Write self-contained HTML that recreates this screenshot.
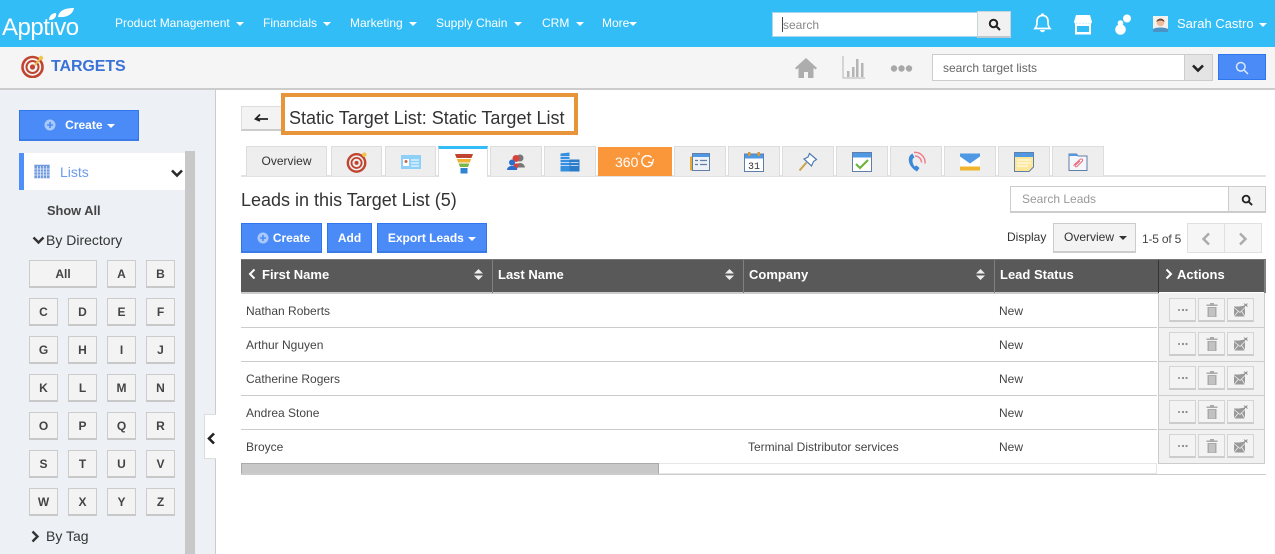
<!DOCTYPE html>
<html><head><meta charset="utf-8"><style>
html,body{margin:0;padding:0}
body{width:1275px;height:554px;overflow:hidden;position:relative;background:#fff;font-family:"Liberation Sans",sans-serif;font-size:12px;color:#333}
.a,.a *{box-sizing:border-box}
.a{position:absolute;white-space:nowrap}
.nav{color:#fff;font-size:12px;top:16px;line-height:14px}
.caret{display:inline-block;width:0;height:0;border-left:4px solid transparent;border-right:4px solid transparent;border-top:4px solid currentColor;vertical-align:middle;margin-left:3px}
.btn{background:#4b8bf8;border:1px solid #2f76ee;border-bottom:2px solid #3a7be8;color:#fff;font-weight:bold;text-align:center}
.k{width:29px;height:28px;background:#f3f3f3;border:1px solid #ccc;border-bottom:2px solid #c8c8c8;font-weight:bold;font-size:12px;line-height:26px;text-align:center;color:#444}
.tab{top:146px;height:30px;background:#eee;border:1px solid #ddd;border-bottom:none}
.tab svg{position:absolute;left:50%;top:50%;transform:translate(-50%,-50%)}
.th{color:#fff;font-weight:bold;font-size:13px;top:267px;line-height:15px}
.td{font-size:12px;line-height:14px;color:#444}
.hl{left:241px;height:1px;width:916px;background:#ccc}
.ab{width:27px;height:24px;background:#f3f3f3;border:1px solid #d4d4d4;border-bottom:2px solid #ccc}
.ab svg{position:absolute;left:50%;top:50%;transform:translate(-50%,-50%)}
</style></head><body>

<div class="a" style="left:0;top:0;width:1275px;height:47px;background:#33bdf6"></div>
<div class="a" style="left:2px;top:14px;color:#fff;font-size:24px;letter-spacing:-.5px;line-height:27px;font-weight:normal">Apptivo</div>
<svg class="a" style="left:48px;top:7px" width="27" height="14" viewBox="0 0 27 14"><path d="M1 13C1 9 4 6 8 6C9 10 6 13 1 13Z M10 10C11 4 16 1 26 1C25 7 19 11 10 10Z" fill="#fff"/></svg>
<div class="a nav" style="left:115px">Product Management <span class="caret"></span></div>
<div class="a nav" style="left:263px">Financials <span class="caret"></span></div>
<div class="a nav" style="left:350px">Marketing <span class="caret"></span></div>
<div class="a nav" style="left:436px">Supply Chain <span class="caret"></span></div>
<div class="a nav" style="left:542px">CRM <span class="caret"></span></div>
<div class="a nav" style="left:602px">More<span class="caret" style="margin-left:0"></span></div>

<div class="a" style="left:772px;top:12px;width:206px;height:25px;background:#fff;border:1px solid #a9d8ee;color:#888;line-height:24px;padding-left:10px;font-size:12px">search</div>
<div class="a" style="left:782px;top:17px;width:1px;height:15px;background:#444"></div>
<div class="a" style="left:977px;top:11px;width:34px;height:27px;background:#f1f1f1;border:1px solid #c8d4da;border-bottom:2px solid #bcc8ce"></div>
<svg class="a" style="left:988px;top:18px" width="13" height="13" viewBox="0 0 13 13"><circle cx="5.500" cy="5.500" r="3.700" fill="none" stroke="#222" stroke-width="2"/><path d="M8.500 8.500L12 12" stroke="#222" stroke-width="2"/></svg>
<svg class="a" style="left:1033px;top:13px" width="19" height="20" viewBox="0 0 19 20"><path d="M2 15.500C4 13 4 11 4 8C4 4.500 6.500 2.500 9.500 2.500C12.500 2.500 15 4.500 15 8C15 11 15 13 17 15.500Z" fill="none" stroke="#fff" stroke-width="1.700"/><circle cx="9.500" cy="1.600" r="1.400" fill="#fff"/><path d="M7 17a2.500 2.200 0 0 0 5 0Z" fill="#fff"/></svg>
<svg class="a" style="left:1074px;top:14px" width="18" height="21" viewBox="0 0 18 21"><path d="M2 1H16L18 8C18 10 15 10 15 8.500C15 10 12 10 12 8.500C12 10 9 10 9 8.500C9 10 6 10 6 8.500C6 10 3 10 3 8.500C3 10 0 10 0 8Z" fill="#fff"/><path d="M1 9.500H17V20.500H1Z M3 12V18H15V12Z" fill="#fff" fill-rule="evenodd"/></svg>
<svg class="a" style="left:1114px;top:14px" width="18" height="22" viewBox="0 0 18 22"><circle cx="13" cy="4.500" r="4" fill="#fff"/><circle cx="6.500" cy="9" r="2.800" fill="#fff"/><circle cx="6.500" cy="15.500" r="5.300" fill="#fff"/></svg>
<svg class="a" style="left:1153px;top:16px" width="15" height="16" viewBox="0 0 15 16"><rect width="15" height="16" fill="#f3f1ee"/><path d="M0 16V13C3 11 12 11 15 13V16Z" fill="#4b93c4"/><circle cx="7.500" cy="6.500" r="3.800" fill="#eebb9d"/><path d="M3.500 6C3.500 1.500 11.500 1.500 11.500 6C9 4 6 4 3.500 6Z" fill="#6d4a34"/></svg>
<div class="a" style="left:1177px;top:16px;color:#fff;font-size:13px;line-height:15px">Sarah Castro <span class="caret" style="margin-left:2px"></span></div>

<div class="a" style="left:0;top:47px;width:1275px;height:43px;background:#f5f5f5;border-bottom:2px solid #ccc"></div>
<svg class="a" style="left:21px;top:54px" width="24" height="24" viewBox="0 0 24 24"><circle cx="11.500" cy="13" r="10" fill="none" stroke="#c0442f" stroke-width="2.600"/><circle cx="11.500" cy="13" r="6" fill="none" stroke="#c0442f" stroke-width="2"/><circle cx="11.500" cy="13" r="2.600" fill="#c0442f"/><path d="M14 11L19 5" stroke="#e7b93f" stroke-width="2"/><circle cx="20" cy="4" r="2.200" fill="#f0c64f"/></svg>
<div class="a" style="left:51px;top:58px;color:#3a72d8;font-weight:bold;font-size:16px;letter-spacing:-.1px;line-height:18px">TARGETS</div>

<svg class="a" style="left:795px;top:57px" width="22" height="22" viewBox="0 0 22 22"><path d="M11 1L0 11L1.500 12.500L3.500 11V21H9V15H13V21H18.500V11L20.500 12.500L22 11Z" fill="#adadad"/></svg>
<svg class="a" style="left:842px;top:56px" width="24" height="23" viewBox="0 0 24 23"><path d="M1 0V22H23" fill="none" stroke="#b5b5b5" stroke-width="1"/><path d="M5 15h2.500v6H5z M10 11h2.500v10H10z M14 3h2.500v18H14z M19 7h2.500v14H19z" fill="#b5b5b5"/></svg>
<svg class="a" style="left:890px;top:64px" width="23" height="9" viewBox="0 0 23 9"><circle cx="4" cy="4.500" r="3.200" fill="#a8a8a8"/><circle cx="11.500" cy="4.500" r="3.200" fill="#a8a8a8"/><circle cx="19" cy="4.500" r="3.200" fill="#a8a8a8"/></svg>
<div class="a" style="left:932px;top:54px;width:253px;height:27px;background:#fff;border:1px solid #ccc;color:#666;line-height:26px;padding-left:10px;font-size:12px">search target lists</div>
<div class="a" style="left:1184px;top:54px;width:29px;height:27px;background:#e4e4e4;border:1px solid #ccc"></div>
<svg class="a" style="left:1191px;top:64px" width="14" height="9" viewBox="0 0 14 9"><path d="M2 1.500L7 6.500L12 1.500" fill="none" stroke="#222" stroke-width="2.600"/></svg>
<div class="a" style="left:1218px;top:54px;width:48px;height:26px;background:#4b8bf8;border:1px solid #2f76ee"></div>
<svg class="a" style="left:1235px;top:61px" width="14" height="14" viewBox="0 0 14 14"><circle cx="5.800" cy="5.800" r="4.300" fill="none" stroke="#dbe8ff" stroke-width="1.500"/><path d="M9 9L13 13" stroke="#dbe8ff" stroke-width="1.500"/></svg>

<div class="a" style="left:0;top:90px;width:216px;height:464px;background:#edf0f5;border-right:1px solid #ccc"></div>
<div class="a btn" style="left:19px;top:110px;width:120px;height:31px;line-height:28px;font-size:12px;padding-left:22px"><svg width="12" height="12" viewBox="0 0 12 12" style="position:absolute;left:24px;top:8px"><circle cx="6" cy="6" r="5.500" fill="#a9c9fb"/><path d="M6 3V9M3 6H9" stroke="#4b8bf8" stroke-width="1.600"/></svg>Create <span class="caret" style="margin-left:1px"></span></div>

<div class="a" style="left:19px;top:153px;width:166px;height:37px;background:#fff;border-left:5px solid #4f8ff9"></div>
<svg class="a" style="left:34px;top:164px" width="16" height="15" viewBox="0 0 16 15"><rect width="16" height="15" fill="#dbe4f5"/><rect x="0.500" y="1" width="15" height="13" fill="#6f9ae0"/><path d="M0 5H16M0 8H16M0 11H16M3.500 2V15M6.500 2V15M9.500 2V15M12.500 2V15" stroke="#e4ebf8" stroke-width=".8"/></svg>
<div class="a" style="left:60px;top:164px;color:#6c9bf0;font-size:14px;line-height:16px">Lists</div>
<svg class="a" style="left:170px;top:169px" width="14" height="9" viewBox="0 0 14 9"><path d="M2 1.500L7 6.500L12 1.500" fill="none" stroke="#2b2b2b" stroke-width="2.600"/></svg>
<div class="a" style="left:185px;top:151px;width:10px;height:403px;background:#c8c8c8"></div>
<div class="a" style="left:47px;top:203px;font-weight:bold;color:#444;font-size:12.800px;line-height:15px">Show All</div>
<svg class="a" style="left:32px;top:236px" width="13" height="9" viewBox="0 0 13 9"><path d="M1.500 1.500L6.500 6.500L11.500 1.500" fill="none" stroke="#333" stroke-width="2.400"/></svg>
<div class="a" style="left:46px;top:232px;color:#333;font-size:14px;line-height:16px">By Directory</div>

<div class="a k" style="left:29px;top:260px;width:68px">All</div>
<div class="a k" style="left:107px;top:260px">A</div><div class="a k" style="left:146px;top:260px">B</div>
<div class="a k" style="left:29px;top:298px">C</div><div class="a k" style="left:68px;top:298px">D</div><div class="a k" style="left:107px;top:298px">E</div><div class="a k" style="left:146px;top:298px">F</div>
<div class="a k" style="left:29px;top:336px">G</div><div class="a k" style="left:68px;top:336px">H</div><div class="a k" style="left:107px;top:336px">I</div><div class="a k" style="left:146px;top:336px">J</div>
<div class="a k" style="left:29px;top:374px">K</div><div class="a k" style="left:68px;top:374px">L</div><div class="a k" style="left:107px;top:374px">M</div><div class="a k" style="left:146px;top:374px">N</div>
<div class="a k" style="left:29px;top:412px">O</div><div class="a k" style="left:68px;top:412px">P</div><div class="a k" style="left:107px;top:412px">Q</div><div class="a k" style="left:146px;top:412px">R</div>
<div class="a k" style="left:29px;top:450px">S</div><div class="a k" style="left:68px;top:450px">T</div><div class="a k" style="left:107px;top:450px">U</div><div class="a k" style="left:146px;top:450px">V</div>
<div class="a k" style="left:29px;top:488px">W</div><div class="a k" style="left:68px;top:488px">X</div><div class="a k" style="left:107px;top:488px">Y</div><div class="a k" style="left:146px;top:488px">Z</div>
<svg class="a" style="left:31px;top:530px" width="9" height="13" viewBox="0 0 9 13"><path d="M1.500 1.500L6.500 6.500L1.500 11.500" fill="none" stroke="#333" stroke-width="2.400"/></svg>
<div class="a" style="left:46px;top:528px;color:#333;font-size:14px;line-height:16px">By Tag</div>
<div class="a" style="left:204px;top:414px;width:12px;height:45px;background:#fff;border:1px solid #ddd;border-right:none"></div>
<svg class="a" style="left:207px;top:432px" width="9" height="13" viewBox="0 0 9 13"><path d="M7 1.500L2 6.500L7 11.500" fill="none" stroke="#222" stroke-width="2.600"/></svg>

<div class="a" style="left:241px;top:106px;width:41px;height:25px;background:#f3f3f3;border:1px solid #ddd;border-bottom:2px solid #ccc"></div>
<svg class="a" style="left:254px;top:113px" width="15" height="11" viewBox="0 0 15 11"><path d="M14 6H2M6 1.500L1.500 6L6 8" fill="none" stroke="#222" stroke-width="1.700"/></svg>
<div class="a" style="left:281px;top:93px;width:297px;height:42px;border:4px solid #e8943a;background:#fff"></div>
<div class="a" style="left:289px;top:108px;font-size:18px;line-height:21px;color:#333">Static Target List: Static Target List</div>

<div class="a" style="left:241px;top:175px;width:1025px;height:2px;background:#e2e2e2"></div>
<div class="a tab" style="left:246px;width:81px;text-align:center;font-size:12px;line-height:28px;color:#333">Overview</div>
<div class="a tab" style="left:331px;width:51px"><svg width="22" height="22" viewBox="0 0 24 24"><circle cx="11.500" cy="13" r="9.500" fill="none" stroke="#c0442f" stroke-width="2.600"/><circle cx="11.500" cy="13" r="5.500" fill="none" stroke="#c0442f" stroke-width="2"/><circle cx="11.500" cy="13" r="2.200" fill="#c0442f"/><circle cx="20" cy="4" r="2.500" fill="#f0c64f"/></svg></div>
<div class="a tab" style="left:385px;width:51px"><svg width="20" height="14" viewBox="0 0 20 14"><rect width="20" height="14" fill="#8ed0f8"/><rect x="2" y="4" width="6" height="7" fill="#fff"/><circle cx="5" cy="6.500" r="1.500" fill="#c4684f"/><path d="M10 5H18M10 8H18M10 11H18" stroke="#fff"/></svg></div>
<div class="a" style="left:438px;top:146px;width:50px;height:31px;background:#fff;border:1px solid #ddd;border-top:3px solid #33bdf6;border-bottom:none"><svg style="position:absolute;left:16px;top:5px" width="18" height="20" viewBox="0 0 18 20"><path d="M0 0H18L16.500 4H1.500Z" fill="#c0442f"/><path d="M1.800 5H16.200L14.800 8.500H3.200Z" fill="#f0b232"/><path d="M3.600 9.500H14.400L13 13H5Z" fill="#7ab648"/><path d="M5.500 14H12.500V19.500H5.500Z" fill="#2f83d0"/></svg></div>
<div class="a tab" style="left:490px;width:52px"><svg width="18" height="17" viewBox="0 0 18 17"><circle cx="13" cy="4.500" r="3.500" fill="#777"/><path d="M9 14C9 8 17 8 18 14Z" fill="#777"/><circle cx="9" cy="5" r="3.500" fill="#d8423a"/><path d="M6 10L12 10L10 16H7Z" fill="#d8423a"/><circle cx="5" cy="9" r="3" fill="#2a6fd0"/><path d="M0 16.500C0 11 10 11 10 16.500Z" fill="#2a6fd0"/></svg></div>
<div class="a tab" style="left:544px;width:52px"><svg width="19" height="19" viewBox="0 0 19 19"><path d="M0 1L9 0V19H0Z" fill="#3590e0"/><path d="M9 7H19V19H9Z" fill="#2a7cc8"/><path d="M0 4H9M0 7H9M0 10H9M0 13H9M10 10H18M10 13H18" stroke="#eef" stroke-width=".8"/></svg></div>
<div class="a" style="left:598px;top:147px;width:74px;height:29px;background:#fb973b;color:#fff;font-size:14px;line-height:31px;padding-left:17px">360<span style="position:absolute;left:39px;top:-6px;font-size:9px">°</span><svg style="position:absolute;left:42px;top:8px" width="14" height="14" viewBox="0 0 14 14"><path d="M11.500 2.500A5.500 5.500 0 1 0 12.500 8" fill="none" stroke="#fff" stroke-width="1.500"/><path d="M8 7L12.500 8L13.500 4" fill="none" stroke="#fff" stroke-width="1.200"/></svg></div>
<div class="a tab" style="left:674px;width:52px"><svg width="20" height="19" viewBox="0 0 20 19"><rect y="4" width="3" height="14" fill="#e7a92f"/><rect x="2.500" y="1" width="17" height="17" fill="#eef2f6" stroke="#5f7ea8"/><rect x="3" y="1.500" width="16" height="3" fill="#4f98e4"/><path d="M5 8H8M10 8H17M5 12H8M10 12H17" stroke="#5f7ea8" stroke-width="1.200"/></svg></div>
<div class="a tab" style="left:728px;width:52px"><svg width="20" height="20" viewBox="0 0 20 20"><rect x=".5" y="2" width="19" height="17.500" fill="#fff" stroke="#5f7ea8"/><rect x="1" y="2.500" width="18" height="4" fill="#4f98e4"/><rect x="4" y="0" width="2.500" height="4" fill="#d19a3a"/><rect x="13.500" y="0" width="2.500" height="4" fill="#d19a3a"/><text x="10" y="17" text-anchor="middle" font-family="Liberation Mono,monospace" font-size="10" fill="#333">31</text></svg></div>
<div class="a tab" style="left:782px;width:52px"><svg width="19" height="19" viewBox="0 0 19 19"><path d="M11 1L18 7L15 9L13 13.500L5.500 6.500L9.500 4.500Z" fill="#fff" stroke="#4f7bb5" stroke-width="1.200"/><path d="M8 10L1 18" stroke="#c9a24a" stroke-width="2"/></svg></div>
<div class="a tab" style="left:836px;width:52px"><svg width="20" height="20" viewBox="0 0 20 20"><rect x=".5" y=".5" width="19" height="19" fill="#fff" stroke="#5f7ea8"/><rect x="1" y="1" width="18" height="4.500" fill="#4f98e4"/><path d="M4 12L8 16L16 8" fill="none" stroke="#6db33f" stroke-width="2.200"/></svg></div>
<div class="a tab" style="left:890px;width:52px"><svg width="20" height="21" viewBox="0 0 20 21"><path d="M5 3C1 6 2 15 11 20L13.500 16.500L10.500 14L8.500 15C6.500 12 6 9 7 7L8.500 6L6.500 2Z" fill="#3c89d8"/><path d="M8 1A10 10 0 0 1 19 12M9 4.500A6.500 6.500 0 0 1 15.500 11" fill="none" stroke="#ee7d8c" stroke-width="1.500"/></svg></div>
<div class="a tab" style="left:944px;width:52px"><svg width="20" height="17" viewBox="0 0 20 17"><rect width="20" height="17" fill="#fff"/><path d="M0 0H20V3L10 10L0 3Z" fill="#4f98e4"/><rect y="13" width="20" height="4" fill="#efb62d"/></svg></div>
<div class="a tab" style="left:998px;width:52px"><svg width="20" height="20" viewBox="0 0 20 20"><path d="M.5 .5H19.500V15L15 19.500H.5Z" fill="#ffe79a" stroke="#5f7ea8"/><rect x="1" y="1" width="18" height="4" fill="#4f98e4"/><path d="M3 8H17M3 11H17M3 14H14" stroke="#fff" stroke-width="1"/></svg></div>
<div class="a tab" style="left:1052px;width:52px"><svg width="19" height="18" viewBox="0 0 19 18"><path d="M.5 2.500V1H8L9.500 3H18.500V17.500H.5Z" fill="#f5f7fa" stroke="#5f7ea8"/><path d="M.5 1H8L9.500 3H.5Z" fill="#4f98e4"/><path d="M5 12.500L11.500 6.500C13.500 5 15 7 13.500 8.500L8.500 13.500C7 14.500 6 13 7 12L11.500 8" fill="none" stroke="#ea6478" stroke-width=".9"/></svg></div>

<div class="a" style="left:241px;top:190px;font-size:18px;line-height:21px;color:#333">Leads in this Target List (5)</div>
<div class="a" style="left:1010px;top:186px;width:219px;height:27px;background:#fff;border:1px solid #ccc;border-bottom:2px solid #ccc;color:#999;line-height:25px;padding-left:11px;font-size:12px">Search Leads</div>
<div class="a" style="left:1228px;top:186px;width:38px;height:27px;background:#f3f3f3;border:1px solid #ccc;border-bottom:2px solid #ccc"></div>
<svg class="a" style="left:1241px;top:194px" width="12" height="12" viewBox="0 0 13 13"><circle cx="5.500" cy="5.500" r="3.700" fill="none" stroke="#222" stroke-width="2"/><path d="M8.500 8.500L12 12" stroke="#222" stroke-width="2"/></svg>

<div class="a btn" style="left:241px;top:223px;width:81px;height:30px;line-height:28px;padding-left:20px"><svg width="12" height="12" viewBox="0 0 12 12" style="position:absolute;left:15px;top:8px"><circle cx="6" cy="6" r="5.500" fill="#a9c9fb"/><path d="M6 3V9M3 6H9" stroke="#4b8bf8" stroke-width="1.600"/></svg>Create</div>
<div class="a btn" style="left:327px;top:223px;width:45px;height:30px;line-height:28px">Add</div>
<div class="a btn" style="left:377px;top:223px;width:110px;height:30px;line-height:28px">Export Leads <span class="caret" style="margin-left:1px"></span></div>

<div class="a" style="left:1007px;top:230px;line-height:14px;color:#333">Display</div>
<div class="a" style="left:1053px;top:223px;width:83px;height:30px;background:#f3f3f3;border:1px solid #ccc;border-bottom:2px solid #ccc;line-height:27px;padding-left:10px;color:#333">Overview <span class="caret" style="margin-left:2px"></span></div>
<div class="a" style="left:1142px;top:232px;line-height:14px;color:#444;font-size:12px;letter-spacing:-.2px">1-5 of 5</div>
<div class="a" style="left:1187px;top:223px;width:38px;height:30px;background:#f6f6f6;border:1px solid #e0e0e0"></div>
<div class="a" style="left:1224px;top:223px;width:38px;height:30px;background:#f6f6f6;border:1px solid #e0e0e0"></div>
<svg class="a" style="left:1201px;top:232px" width="10" height="14" viewBox="0 0 10 14"><path d="M8 1.500L2.500 7L8 12.500" fill="none" stroke="#aaa" stroke-width="2.400"/></svg>
<svg class="a" style="left:1238px;top:232px" width="10" height="14" viewBox="0 0 10 14"><path d="M2 1.500L7.500 7L2 12.500" fill="none" stroke="#aaa" stroke-width="2.400"/></svg>

<div class="a" style="left:241px;top:259px;width:1025px;height:33px;background:#595959;border-top:1px solid #777"></div>
<div class="a" style="left:241px;top:292px;width:917px;height:2px;background:#ccc"></div>
<div class="a" style="left:492px;top:260px;width:1px;height:33px;background:#808080"></div>
<div class="a" style="left:743px;top:260px;width:1px;height:33px;background:#808080"></div>
<div class="a" style="left:994px;top:260px;width:1px;height:33px;background:#808080"></div>
<div class="a" style="left:1158px;top:260px;width:1px;height:33px;background:#333"></div>
<div class="a" style="left:1264px;top:260px;width:2px;height:33px;background:#808080"></div>
<svg class="a" style="left:248px;top:268px" width="8" height="12" viewBox="0 0 8 12"><path d="M6.500 1.500L2 6L6.500 10.500" fill="none" stroke="#fff" stroke-width="2"/></svg>
<div class="a th" style="left:262px">First Name</div>
<div class="a th" style="left:498px">Last Name</div>
<div class="a th" style="left:749px">Company</div>
<div class="a th" style="left:1000px">Lead Status</div>
<svg class="a" style="left:1165px;top:268px" width="8" height="12" viewBox="0 0 8 12"><path d="M1.500 1.500L6 6L1.500 10.500" fill="none" stroke="#fff" stroke-width="2"/></svg>
<div class="a th" style="left:1177px">Actions</div>
<svg class="a" style="left:474px;top:269px" width="9" height="11" viewBox="0 0 9 11"><path d="M4.500 0L9 4.500H0Z M0 6.500H9L4.500 11Z" fill="#eee"/></svg>
<svg class="a" style="left:725px;top:269px" width="9" height="11" viewBox="0 0 9 11"><path d="M4.500 0L9 4.500H0Z M0 6.500H9L4.500 11Z" fill="#eee"/></svg>
<svg class="a" style="left:976px;top:269px" width="9" height="11" viewBox="0 0 9 11"><path d="M4.500 0L9 4.500H0Z M0 6.500H9L4.500 11Z" fill="#eee"/></svg>

<div class="a" style="left:1158px;top:293px;width:107px;height:171px;background:#f1f1f1;border:1px solid #ccc;border-top:none"></div>
<div class="a td" style="left:246px;top:304px">Nathan Roberts</div><div class="a td" style="left:999px;top:304px">New</div>
<div class="a hl" style="top:327px"></div>
<div class="a td" style="left:246px;top:338px">Arthur Nguyen</div><div class="a td" style="left:999px;top:338px">New</div>
<div class="a hl" style="top:361px"></div>
<div class="a td" style="left:246px;top:372px">Catherine Rogers</div><div class="a td" style="left:999px;top:372px">New</div>
<div class="a hl" style="top:395px"></div>
<div class="a td" style="left:246px;top:406px">Andrea Stone</div><div class="a td" style="left:999px;top:406px">New</div>
<div class="a hl" style="top:429px"></div>
<div class="a td" style="left:246px;top:440px">Broyce</div><div class="a td" style="left:748px;top:440px">Terminal Distributor services</div><div class="a td" style="left:999px;top:440px">New</div>
<div class="a" style="left:1158px;top:327px;width:107px;height:1px;background:#ccc"></div>
<div class="a" style="left:1158px;top:361px;width:107px;height:1px;background:#ccc"></div>
<div class="a" style="left:1158px;top:395px;width:107px;height:1px;background:#ccc"></div>
<div class="a" style="left:1158px;top:429px;width:107px;height:1px;background:#ccc"></div>

<div class="a ab" style="left:1169px;top:298px"><svg width="11" height="4" viewBox="0 0 11 4"><circle cx="1.500" cy="2" r="1" fill="#888"/><circle cx="5.500" cy="2" r="1.100" fill="#888"/><circle cx="9" cy="2" r="1.100" fill="#888"/></svg></div>
<div class="a ab" style="left:1198px;top:298px"><svg width="11" height="14" viewBox="0 0 11 14"><path d="M3.500 0H7.500V1.500H3.500Z M0 1.500H11V3H0Z M1 4H10V14H1Z" fill="#aaa"/><path d="M3.500 5V13.500M5.500 5V13.500M7.500 5V13.500" stroke="#eee" stroke-width=".7"/></svg></div>
<div class="a ab" style="left:1227px;top:298px"><svg width="14" height="13" viewBox="0 0 14 13"><path d="M0 3L5 3L11 2V13H0Z" fill="#999"/><path d="M0 4L6 9L11 4M0 13L4.500 7.500M11 13L7.500 7.500" fill="none" stroke="#eee" stroke-width=".8"/><path d="M10 0L13.500 3M13.500 0L10 3" stroke="#888"/></svg></div>
<div class="a ab" style="left:1169px;top:332px"><svg width="11" height="4" viewBox="0 0 11 4"><circle cx="1.500" cy="2" r="1" fill="#888"/><circle cx="5.500" cy="2" r="1.100" fill="#888"/><circle cx="9" cy="2" r="1.100" fill="#888"/></svg></div>
<div class="a ab" style="left:1198px;top:332px"><svg width="11" height="14" viewBox="0 0 11 14"><path d="M3.500 0H7.500V1.500H3.500Z M0 1.500H11V3H0Z M1 4H10V14H1Z" fill="#aaa"/><path d="M3.500 5V13.500M5.500 5V13.500M7.500 5V13.500" stroke="#eee" stroke-width=".7"/></svg></div>
<div class="a ab" style="left:1227px;top:332px"><svg width="14" height="13" viewBox="0 0 14 13"><path d="M0 3L5 3L11 2V13H0Z" fill="#999"/><path d="M0 4L6 9L11 4M0 13L4.500 7.500M11 13L7.500 7.500" fill="none" stroke="#eee" stroke-width=".8"/><path d="M10 0L13.500 3M13.500 0L10 3" stroke="#888"/></svg></div>
<div class="a ab" style="left:1169px;top:366px"><svg width="11" height="4" viewBox="0 0 11 4"><circle cx="1.500" cy="2" r="1" fill="#888"/><circle cx="5.500" cy="2" r="1.100" fill="#888"/><circle cx="9" cy="2" r="1.100" fill="#888"/></svg></div>
<div class="a ab" style="left:1198px;top:366px"><svg width="11" height="14" viewBox="0 0 11 14"><path d="M3.500 0H7.500V1.500H3.500Z M0 1.500H11V3H0Z M1 4H10V14H1Z" fill="#aaa"/><path d="M3.500 5V13.500M5.500 5V13.500M7.500 5V13.500" stroke="#eee" stroke-width=".7"/></svg></div>
<div class="a ab" style="left:1227px;top:366px"><svg width="14" height="13" viewBox="0 0 14 13"><path d="M0 3L5 3L11 2V13H0Z" fill="#999"/><path d="M0 4L6 9L11 4M0 13L4.500 7.500M11 13L7.500 7.500" fill="none" stroke="#eee" stroke-width=".8"/><path d="M10 0L13.500 3M13.500 0L10 3" stroke="#888"/></svg></div>
<div class="a ab" style="left:1169px;top:400px"><svg width="11" height="4" viewBox="0 0 11 4"><circle cx="1.500" cy="2" r="1" fill="#888"/><circle cx="5.500" cy="2" r="1.100" fill="#888"/><circle cx="9" cy="2" r="1.100" fill="#888"/></svg></div>
<div class="a ab" style="left:1198px;top:400px"><svg width="11" height="14" viewBox="0 0 11 14"><path d="M3.500 0H7.500V1.500H3.500Z M0 1.500H11V3H0Z M1 4H10V14H1Z" fill="#aaa"/><path d="M3.500 5V13.500M5.500 5V13.500M7.500 5V13.500" stroke="#eee" stroke-width=".7"/></svg></div>
<div class="a ab" style="left:1227px;top:400px"><svg width="14" height="13" viewBox="0 0 14 13"><path d="M0 3L5 3L11 2V13H0Z" fill="#999"/><path d="M0 4L6 9L11 4M0 13L4.500 7.500M11 13L7.500 7.500" fill="none" stroke="#eee" stroke-width=".8"/><path d="M10 0L13.500 3M13.500 0L10 3" stroke="#888"/></svg></div>
<div class="a ab" style="left:1169px;top:434px"><svg width="11" height="4" viewBox="0 0 11 4"><circle cx="1.500" cy="2" r="1" fill="#888"/><circle cx="5.500" cy="2" r="1.100" fill="#888"/><circle cx="9" cy="2" r="1.100" fill="#888"/></svg></div>
<div class="a ab" style="left:1198px;top:434px"><svg width="11" height="14" viewBox="0 0 11 14"><path d="M3.500 0H7.500V1.500H3.500Z M0 1.500H11V3H0Z M1 4H10V14H1Z" fill="#aaa"/><path d="M3.500 5V13.500M5.500 5V13.500M7.500 5V13.500" stroke="#eee" stroke-width=".7"/></svg></div>
<div class="a ab" style="left:1227px;top:434px"><svg width="14" height="13" viewBox="0 0 14 13"><path d="M0 3L5 3L11 2V13H0Z" fill="#999"/><path d="M0 4L6 9L11 4M0 13L4.500 7.500M11 13L7.500 7.500" fill="none" stroke="#eee" stroke-width=".8"/><path d="M10 0L13.500 3M13.500 0L10 3" stroke="#888"/></svg></div>

<div class="a" style="left:241px;top:463px;width:916px;height:11px;background:#fff;border:1px solid #e6e6e6"></div>
<div class="a" style="left:241px;top:463px;width:418px;height:11px;background:#c8c8c8;border:1px solid #aaa;border-bottom-color:#ccc"></div>
<div class="a" style="left:241px;top:474px;width:1025px;height:1px;background:#ccc"></div>

</body></html>
